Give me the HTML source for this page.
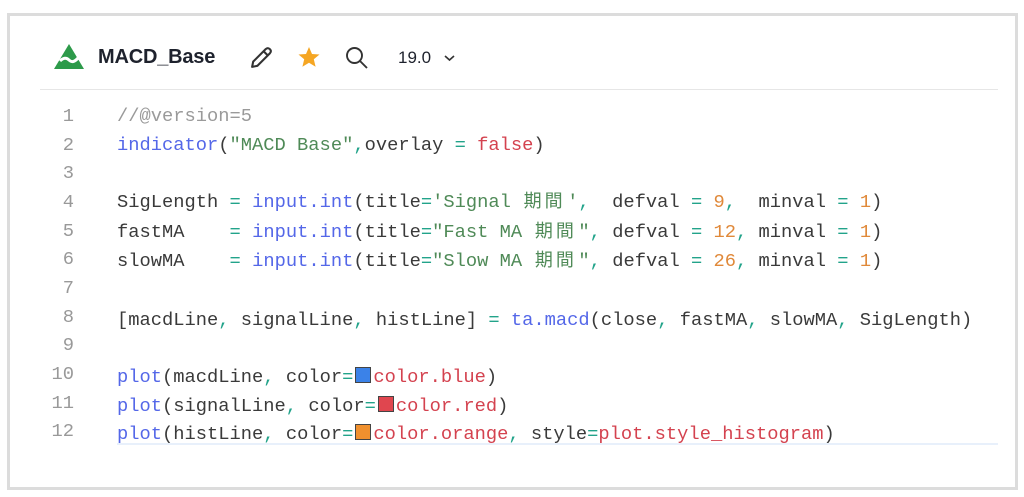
<!DOCTYPE html>
<html><head><meta charset="utf-8"><style>
*{margin:0;padding:0;box-sizing:border-box}
body{width:1024px;height:497px;background:#fff;position:relative;overflow:hidden;font-family:"Liberation Sans",sans-serif}
.frame{position:absolute;left:7px;top:13px;width:1011px;height:477px;border:3px solid #dcdcdc}
.title{position:absolute;left:98px;top:46px;font-size:20px;font-weight:bold;color:#1e222d;letter-spacing:-0.2px}
.ver{position:absolute;left:398px;top:48px;font-size:17px;color:#1e222d}
.div{position:absolute;left:40px;top:89px;width:958px;height:1px;background:#e6e6e6}
.code{position:absolute;left:0;top:102px;font-family:"Liberation Mono","Noto Sans CJK JP",monospace;font-size:18.75px;line-height:28.65px;color:#3a3a3a;white-space:pre}
.ln{position:absolute;left:30px;width:44px;text-align:right;color:#999}
.tx{position:absolute;left:117px}
.k{color:#5467e8}.s{color:#4f8a57}.n{color:#e0893a}.o{color:#22a38a}.r{color:#d4424f}.c{color:#9a9a9a}
.j{display:inline-block;width:45px;letter-spacing:3px;font-size:18px;text-align:center}
.sw{display:inline-block;width:16px;height:16px;border:1.5px solid #444;vertical-align:-1px;margin:0 2px 0 2px}
.ul{position:absolute;left:117px;top:443px;width:881px;height:2px;background:#e8f0fb}
</style></head><body>
<div class="frame"></div>
<svg style="position:absolute;left:52px;top:42px" width="34" height="29" viewBox="0 0 34 29">
<path d="M17 2 L32 27 L2 27 Z" fill="#2d9a4a"/>
<path d="M8 19 Q13 14 17 18 Q21 22 26 16" stroke="#fff" stroke-width="3" fill="none"/>
</svg>
<div class="title">MACD_Base</div>
<svg style="position:absolute;left:249px;top:45px" width="25" height="25" viewBox="0 0 24 24" fill="none" stroke="#333" stroke-width="2" stroke-linejoin="round"><path d="M3 21 L4 16 L16 4 Q18 2 20 4 Q22 6 20 8 L8 20 Z M14 6 L18 10"/></svg>
<svg style="position:absolute;left:297px;top:45px" width="24" height="24" viewBox="0 0 24 24"><path d="M12 2 L15 9 L22.5 9.5 L16.8 14.3 L18.6 21.8 L12 17.8 L5.4 21.8 L7.2 14.3 L1.5 9.5 L9 9 Z" fill="#f5a623"/></svg>
<svg style="position:absolute;left:344px;top:45px" width="25" height="25" viewBox="0 0 25 25" fill="none" stroke="#333" stroke-width="1.9"><circle cx="10.5" cy="10.5" r="7.5"/><path d="M16 16 L23 23"/></svg>
<div class="ver">19.0</div>
<svg style="position:absolute;left:443px;top:54px" width="13" height="8" viewBox="0 0 13 8" fill="none" stroke="#333" stroke-width="1.6"><path d="M2 2 L6.5 6 L11 2"/></svg>
<div class="div"></div>
<div class="code">
<div class="ln" style="top:0">1</div><div class="ln" style="top:28.65px">2</div><div class="ln" style="top:57.3px">3</div><div class="ln" style="top:85.95px">4</div><div class="ln" style="top:114.6px">5</div><div class="ln" style="top:143.25px">6</div><div class="ln" style="top:171.9px">7</div><div class="ln" style="top:200.55px">8</div><div class="ln" style="top:229.2px">9</div><div class="ln" style="top:257.85px">10</div><div class="ln" style="top:286.5px">11</div><div class="ln" style="top:315.15px">12</div>
<div class="tx" style="top:0"><span class="c">//@version=5</span>
<span class="k">indicator</span>(<span class="s">"MACD Base"</span><span class="o">,</span>overlay <span class="o">=</span> <span class="r">false</span>)

SigLength <span class="o">=</span> <span class="k">input.int</span>(title<span class="o">=</span><span class="s">'Signal <span class="j">期間</span>'</span><span class="o">,</span>  defval <span class="o">=</span> <span class="n">9</span><span class="o">,</span>  minval <span class="o">=</span> <span class="n">1</span>)
fastMA    <span class="o">=</span> <span class="k">input.int</span>(title<span class="o">=</span><span class="s">"Fast MA <span class="j">期間</span>"</span><span class="o">,</span> defval <span class="o">=</span> <span class="n">12</span><span class="o">,</span> minval <span class="o">=</span> <span class="n">1</span>)
slowMA    <span class="o">=</span> <span class="k">input.int</span>(title<span class="o">=</span><span class="s">"Slow MA <span class="j">期間</span>"</span><span class="o">,</span> defval <span class="o">=</span> <span class="n">26</span><span class="o">,</span> minval <span class="o">=</span> <span class="n">1</span>)

[macdLine<span class="o">,</span> signalLine<span class="o">,</span> histLine] <span class="o">=</span> <span class="k">ta.macd</span>(close<span class="o">,</span> fastMA<span class="o">,</span> slowMA<span class="o">,</span> SigLength)

<span class="k">plot</span>(macdLine<span class="o">,</span> color<span class="o">=</span><span class="sw" style="background:#3b82e8"></span><span class="r">color.blue</span>)
<span class="k">plot</span>(signalLine<span class="o">,</span> color<span class="o">=</span><span class="sw" style="background:#e0464f"></span><span class="r">color.red</span>)
<span class="k">plot</span>(histLine<span class="o">,</span> color<span class="o">=</span><span class="sw" style="background:#f0902e"></span><span class="r">color.orange</span><span class="o">,</span> style<span class="o">=</span><span class="r">plot.style_histogram</span>)</div>
</div>
<div class="ul"></div>
</body></html>
